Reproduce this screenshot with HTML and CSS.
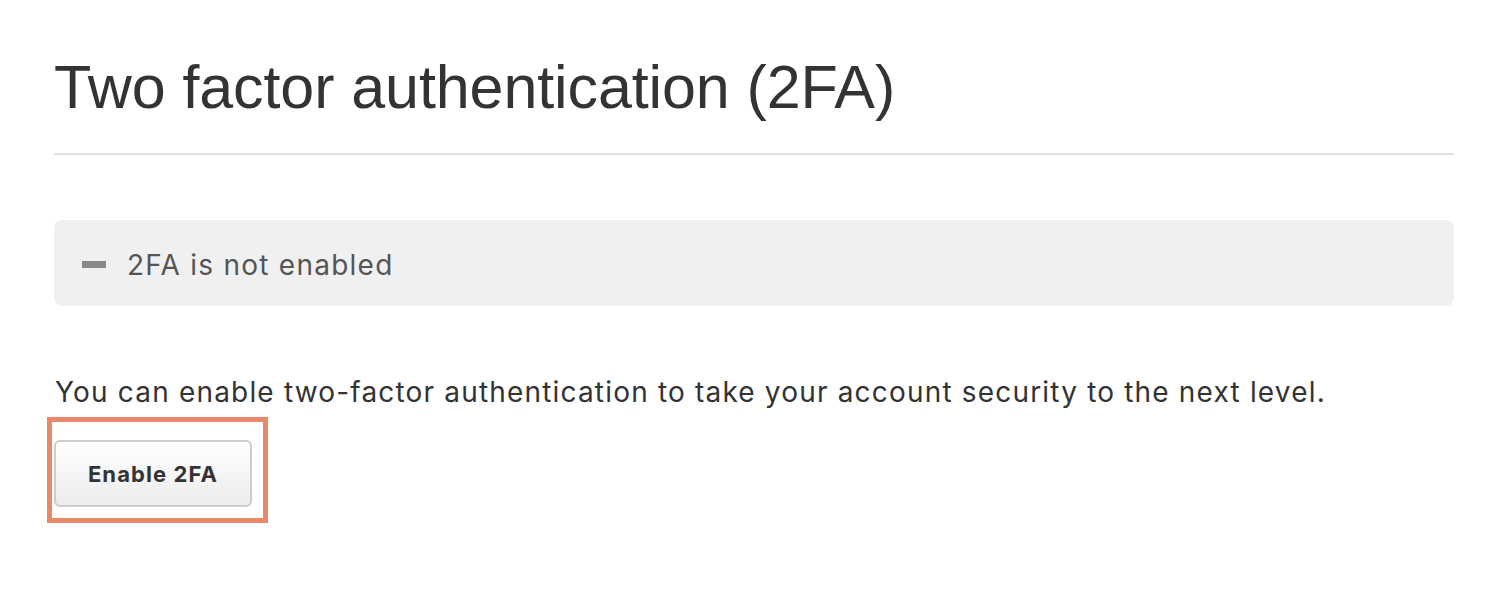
FILE: index.html
```html
<!DOCTYPE html>
<html lang="en">
<head>
<meta charset="utf-8">
<title>Two factor authentication (2FA)</title>
<link rel="stylesheet" href="styles.css">
</head>
<body>
  <main class="page">
    <h1 class="page-title">Two factor authentication (2FA)</h1>
    <div class="status-box">
      <span class="status-icon" aria-hidden="true"></span>
      <span class="status-text">2FA is not enabled</span>
    </div>
    <p class="intro">You can enable two-factor authentication to take your account security to the next level.</p>
    <div class="action-highlight">
      <button class="btn" type="button">Enable 2FA</button>
    </div>
  </main>
</body>
</html>
```

FILE: styles.css
```css
* {
  box-sizing: border-box;
}

html, body {
  margin: 0;
  padding: 0;
  background: #ffffff;
}

body {
  font-family: Inter, "Liberation Sans", Arial, sans-serif;
  color: #333333;
}

.page {
  width: 1400px;
  margin-left: 54px;
  padding-top: 44px;
}

.page-title {
  margin: 0;
  font-family: "Liberation Sans", Arial, sans-serif;
  font-size: 61px;
  font-weight: 400;
  line-height: 86px;
  color: #333333;
  letter-spacing: -0.1px;
  padding-bottom: 23px;
  border-bottom: 2px solid #e0e0e0;
}

.status-box {
  margin-top: 65px;
  height: 86px;
  background: #f0f0f0;
  border-radius: 8px;
  display: flex;
  align-items: center;
  padding-left: 28px;
  gap: 21px;
}

.status-icon {
  width: 24px;
  height: 7px;
  background: #888888;
  margin-top: 2px;
}

.status-text {
  font-size: 28px;
  letter-spacing: 1.25px;
  color: #555555;
  padding-top: 4px;
}

.intro {
  margin: 66px 0 0 1px;
  font-size: 28px;
  letter-spacing: 1.18px;
  line-height: 40px;
  color: #333333;
}

.action-highlight {
  display: inline-block;
  margin: 5px 0 0 -7px;
  padding: 18px 11px 11px 2px;
  border: 5px solid #e9896a;
}

.btn {
  display: block;
  width: 198px;
  height: 67px;
  font-family: Inter, "Liberation Sans", Arial, sans-serif;
  font-size: 22px;
  font-weight: 700;
  letter-spacing: 1.1px;
  color: #333333;
  background: linear-gradient(#ffffff, #ececec);
  border: 2px solid #cccccc;
  border-radius: 6px;
  padding: 0;
}
```
